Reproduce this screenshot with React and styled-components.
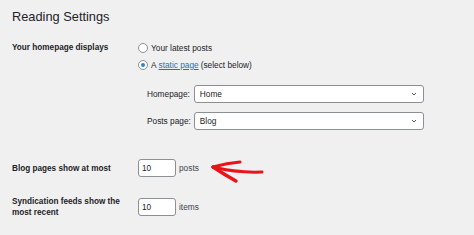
import styled, { createGlobalStyle } from 'styled-components';

const GlobalStyle = createGlobalStyle`
  html, body {
    margin: 0;
    padding: 0;
    background: #f0f0f1;
  }
  body {
    font-family: "Liberation Sans", Arial, sans-serif;
    color: #1d2327;
  }
`;

const Page = styled.div`
  position: relative;
  width: 474px;
  height: 235px;
  overflow: hidden;
  padding: 9px 12px 0;
  box-sizing: border-box;
  background: #f0f0f1;
`;

const Title = styled.h1`
  margin: 0 0 15px;
  font-size: 12.8px;
  line-height: 15px;
  font-weight: 400;
  color: #1d2327;
`;

const FormRow = styled.div`
  display: grid;
  grid-template-columns: 126px 1fr;
  align-items: ${p => p.$align || 'center'};
  margin-top: ${p => p.$gap || 0}px;
`;

const RowLabel = styled.div`
  font-size: 8.2px;
  font-weight: 700;
  line-height: ${p => p.$lh || 11}px;
  color: #1d2327;
`;

const Field = styled.div`
  display: flex;
  flex-direction: column;
  font-size: 8.3px;
`;

const RadioLine = styled.label`
  display: flex;
  align-items: center;
  height: 17px;
  gap: 3px;
`;

const Radio = styled.span`
  width: 10px;
  height: 10px;
  box-sizing: border-box;
  border-radius: 50%;
  border: 1px solid #8c8f94;
  background: #fff;
  display: flex;
  align-items: center;
  justify-content: center;
  &::after {
    content: '';
    width: 4px;
    height: 4px;
    border-radius: 50%;
    background: ${p => (p.$checked ? '#3582c4' : 'transparent')};
  }
`;

const Link = styled.a`
  color: #2271b1;
  text-decoration: underline;
  margin: 0 2px;
`;

const SelectGroup = styled.div`
  display: grid;
  grid-template-columns: auto 230px;
  column-gap: 3px;
  row-gap: 9px;
  align-items: center;
  justify-content: start;
  padding-left: 9px;
  margin-top: 12px;
`;

const SelectLabel = styled.span`
  font-size: 8.3px;
`;

const Select = styled.div`
  height: 18px;
  box-sizing: border-box;
  border: 1px solid #8c8f94;
  border-radius: 3px;
  background: #fff;
  display: flex;
  align-items: center;
  justify-content: space-between;
  padding: 0 6px 0 5px;
  font-size: 8.3px;
`;

const NumberRow = styled.div`
  display: flex;
  align-items: center;
  gap: 3px;
  font-size: 8.3px;
  color: #3c434a;
`;

const NumberInput = styled.div`
  width: 38px;
  height: 18px;
  box-sizing: border-box;
  border: 1px solid #8c8f94;
  border-radius: 3px;
  background: #fff;
  display: flex;
  align-items: center;
  padding-left: 3px;
  color: #1d2327;
`;

const Arrow = styled.svg`
  position: absolute;
  left: 205px;
  top: 155px;
  width: 65px;
  height: 32px;
`;

const Chevron = () => (
  <svg width="6" height="4" viewBox="0 0 6 4">
    <path d="M1 1 L3 3 L5 1" fill="none" stroke="#50575e" strokeWidth="1" />
  </svg>
);

export default function App() {
  return (
    <Page>
      <GlobalStyle />
      <Title>Reading Settings</Title>

      <FormRow $align="start">
        <RowLabel $lh={17}>Your homepage displays</RowLabel>
        <Field>
          <RadioLine>
            <Radio />
            Your latest posts
          </RadioLine>
          <RadioLine>
            <Radio $checked />
            <span>
              A<Link>static page</Link>(select below)
            </span>
          </RadioLine>
          <SelectGroup>
            <SelectLabel>Homepage:</SelectLabel>
            <Select>
              Home
              <Chevron />
            </Select>
            <SelectLabel>Posts page:</SelectLabel>
            <Select>
              Blog
              <Chevron />
            </Select>
          </SelectGroup>
        </Field>
      </FormRow>

      <FormRow $gap={29}>
        <RowLabel>Blog pages show at most</RowLabel>
        <NumberRow>
          <NumberInput>10</NumberInput>
          posts
        </NumberRow>
      </FormRow>

      <FormRow $gap={19}>
        <RowLabel>
          Syndication feeds show the
          <br />
          most recent
        </RowLabel>
        <NumberRow>
          <NumberInput>10</NumberInput>
          items
        </NumberRow>
      </FormRow>

      <Arrow viewBox="0 0 65 32">
        <g fill="none" stroke="#e8141b" strokeLinecap="round" strokeLinejoin="round">
          <path d="M57 17 Q32 18 8 12" strokeWidth="3" />
          <path d="M8 12 Q22 8 35 7" strokeWidth="3" />
          <path d="M8 12 Q20 20 31 26" strokeWidth="3.4" />
        </g>
      </Arrow>
    </Page>
  );
}
